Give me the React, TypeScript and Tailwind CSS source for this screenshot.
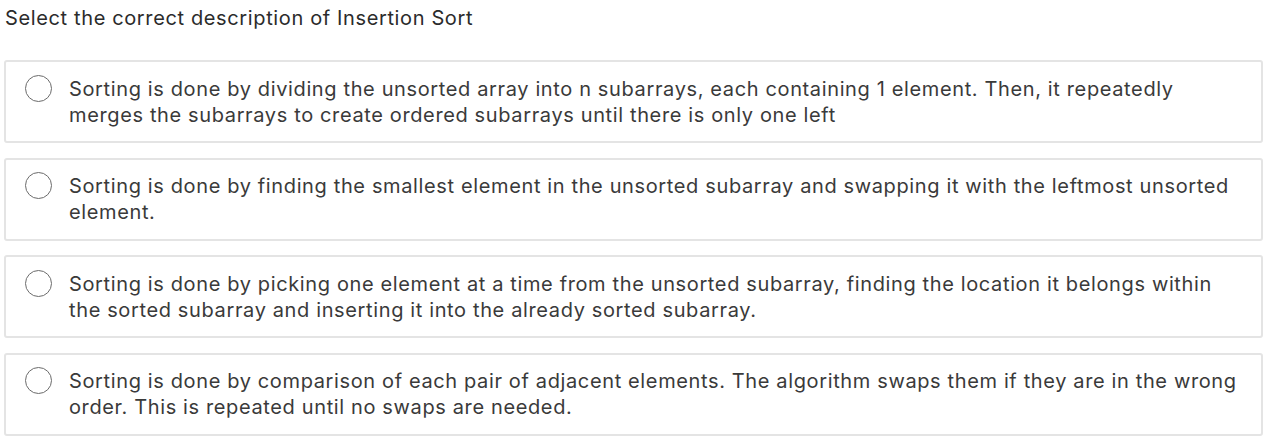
const options = [
  'Sorting is done by dividing the unsorted array into n subarrays, each containing 1 element. Then, it repeatedly merges the subarrays to create ordered subarrays until there is only one left',
  'Sorting is done by finding the smallest element in the unsorted subarray and swapping it with the leftmost unsorted element.',
  'Sorting is done by picking one element at a time from the unsorted subarray, finding the location it belongs within the sorted subarray and inserting it into the already sorted subarray.',
  'Sorting is done by comparison of each pair of adjacent elements. The algorithm swaps them if they are in the wrong order. This is repeated until no swaps are needed.',
];

export default function App() {
  return (
    <div className="w-[1270px] h-[446px] bg-white font-['Inter',sans-serif] tracking-[0.63px] text-[#2b2b2b]">
      <div className="pl-[5px] pt-[5px] text-[20px] leading-[26px]">Select the correct description of Insertion Sort</div>
      <div className="mt-[29px] ml-[4px] w-[1259px] flex flex-col gap-[14.5px]">
        {options.map((text, i) => (
          <label
            key={i}
            className="flex items-start gap-[17px] border-2 border-[#e4e4e4] rounded-[3px] pl-[19px] pr-[20px] py-[13.5px] cursor-pointer"
          >
            <span className="mt-[-1px] w-[27px] h-[27px] shrink-0 rounded-full border-[1.5px] border-[#6b6b6b] bg-white" />
            <span className="text-[20px] leading-[26px] text-[#3a3a3a]">{text}</span>
          </label>
        ))}
      </div>
    </div>
  );
}
